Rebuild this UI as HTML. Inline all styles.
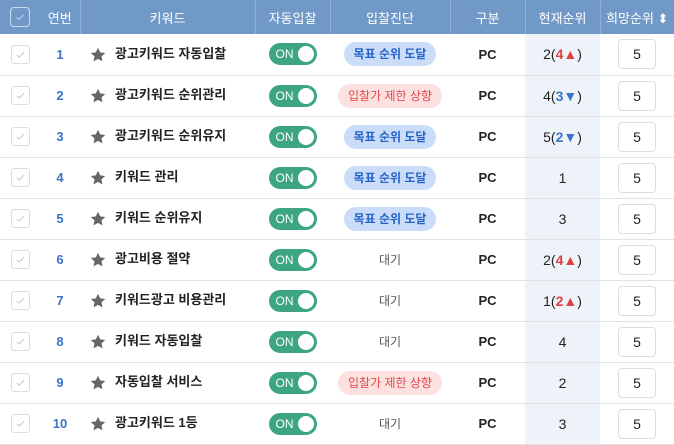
<!DOCTYPE html>
<html><head><meta charset="utf-8"><style>
*{box-sizing:border-box;margin:0;padding:0}
body{width:674px;height:444px;overflow:hidden;background:#fff;font-family:"Liberation Sans","Noto Sans CJK KR",sans-serif;}
table{border-collapse:collapse;table-layout:fixed;width:674px}
th{background:#7199c8;color:#fff;font-weight:normal;font-size:13px;height:34px;border-right:1px solid #8fb0d6}
th:last-child{border-right:none}
td{height:41px;border-bottom:1px solid #e2e2e2;text-align:center;font-size:13px;color:#222;vertical-align:middle}
td.kw{text-align:left;padding-left:10px;font-weight:bold;color:#222}
.k{display:flex;align-items:center;height:20px;line-height:20px;margin-top:-1px}
.k svg{margin-right:9px;flex:none;position:relative;top:1px}
td.n{color:#3a74c9;font-weight:bold}
td.cur{background:#eef3fa;font-size:14px}
.cb{display:inline-block;width:19px;height:19px;border:1px solid #ddd;border-radius:3px;vertical-align:middle}
.hcb{border-color:#c9dbef;border-radius:4px;width:20px;height:20px}
.tg{display:inline-block;width:48px;height:22px;border-radius:11px;background:#3da584;color:#fff;font-size:12px;position:relative;text-align:left;padding-left:7px;line-height:22px;vertical-align:middle}
.tg:after{content:"";position:absolute;right:3px;top:3px;width:16px;height:16px;border-radius:50%;background:#fff}
.bd{display:inline-block;padding:0 10px;height:24px;line-height:24px;border-radius:12px;font-size:12px;font-weight:bold}
.b{background:#cadcf7;color:#2563c9}
.r{background:#fde1e1;color:#e04a4a;font-weight:normal}
.w{color:#555;font-size:12px}
.in{display:inline-block;width:38px;height:30px;border:1px solid #ddd;border-radius:4px;line-height:28px;font-size:14px}
.up{color:#e04040;font-weight:bold}.dn{color:#3a74c9;font-weight:bold}
</style></head><body>
<svg width="0" height="0" style="position:absolute"><defs>
<symbol id="s" viewBox="0 0 16 16"><path d="M8 0.8l2.2 4.6 5 .6-3.7 3.4 1 5-4.5-2.5-4.5 2.5 1-5L.8 6l5-.6z" fill="#666"/></symbol>
<symbol id="c" viewBox="0 0 19 19"><path d="M5.5 9.8l2.6 2.6 5.4-5.6" fill="none" stroke="#c4c4c4" stroke-width="1"/></symbol>
</defs></svg>
<table>
<colgroup><col style="width:40px"><col style="width:40px"><col style="width:175px"><col style="width:75px"><col style="width:120px"><col style="width:75px"><col style="width:75px"><col style="width:74px"></colgroup>
<tr><th style="border-right:none"><span class="cb hcb"><svg width="18" height="18" viewBox="0 0 19 19"><path d="M5.5 9.8l2.6 2.6 5.4-5.6" fill="none" stroke="#b9cfea" stroke-width="1"/></svg></span></th><th>연번</th><th>키워드</th><th>자동입찰</th><th>입찰진단</th><th>구분</th><th>현재순위</th><th>희망순위 ⬍</th></tr>
<tr><td><span class="cb"><svg width="17" height="17"><use href="#c"/></svg></span></td><td class="n">1</td><td class="kw"><div class="k"><svg width="16" height="16"><use href="#s"/></svg>광고키워드 자동입찰</div></td><td><span class="tg">ON</span></td><td><span class="bd b">목표 순위 도달</span></td><td><b>PC</b></td><td class="cur">2(<span class="up">4▲</span>)</td><td><span class="in">5</span></td></tr>
<tr><td><span class="cb"><svg width="17" height="17"><use href="#c"/></svg></span></td><td class="n">2</td><td class="kw"><div class="k"><svg width="16" height="16"><use href="#s"/></svg>광고키워드 순위관리</div></td><td><span class="tg">ON</span></td><td><span class="bd r">입찰가 제한 상향</span></td><td><b>PC</b></td><td class="cur">4(<span class="dn">3▼</span>)</td><td><span class="in">5</span></td></tr>
<tr><td><span class="cb"><svg width="17" height="17"><use href="#c"/></svg></span></td><td class="n">3</td><td class="kw"><div class="k"><svg width="16" height="16"><use href="#s"/></svg>광고키워드 순위유지</div></td><td><span class="tg">ON</span></td><td><span class="bd b">목표 순위 도달</span></td><td><b>PC</b></td><td class="cur">5(<span class="dn">2▼</span>)</td><td><span class="in">5</span></td></tr>
<tr><td><span class="cb"><svg width="17" height="17"><use href="#c"/></svg></span></td><td class="n">4</td><td class="kw"><div class="k"><svg width="16" height="16"><use href="#s"/></svg>키워드 관리</div></td><td><span class="tg">ON</span></td><td><span class="bd b">목표 순위 도달</span></td><td><b>PC</b></td><td class="cur">1</td><td><span class="in">5</span></td></tr>
<tr><td><span class="cb"><svg width="17" height="17"><use href="#c"/></svg></span></td><td class="n">5</td><td class="kw"><div class="k"><svg width="16" height="16"><use href="#s"/></svg>키워드 순위유지</div></td><td><span class="tg">ON</span></td><td><span class="bd b">목표 순위 도달</span></td><td><b>PC</b></td><td class="cur">3</td><td><span class="in">5</span></td></tr>
<tr><td><span class="cb"><svg width="17" height="17"><use href="#c"/></svg></span></td><td class="n">6</td><td class="kw"><div class="k"><svg width="16" height="16"><use href="#s"/></svg>광고비용 절약</div></td><td><span class="tg">ON</span></td><td><span class="w">대기</span></td><td><b>PC</b></td><td class="cur">2(<span class="up">4▲</span>)</td><td><span class="in">5</span></td></tr>
<tr><td><span class="cb"><svg width="17" height="17"><use href="#c"/></svg></span></td><td class="n">7</td><td class="kw"><div class="k"><svg width="16" height="16"><use href="#s"/></svg>키워드광고 비용관리</div></td><td><span class="tg">ON</span></td><td><span class="w">대기</span></td><td><b>PC</b></td><td class="cur">1(<span class="up">2▲</span>)</td><td><span class="in">5</span></td></tr>
<tr><td><span class="cb"><svg width="17" height="17"><use href="#c"/></svg></span></td><td class="n">8</td><td class="kw"><div class="k"><svg width="16" height="16"><use href="#s"/></svg>키워드 자동입찰</div></td><td><span class="tg">ON</span></td><td><span class="w">대기</span></td><td><b>PC</b></td><td class="cur">4</td><td><span class="in">5</span></td></tr>
<tr><td><span class="cb"><svg width="17" height="17"><use href="#c"/></svg></span></td><td class="n">9</td><td class="kw"><div class="k"><svg width="16" height="16"><use href="#s"/></svg>자동입찰 서비스</div></td><td><span class="tg">ON</span></td><td><span class="bd r">입찰가 제한 상향</span></td><td><b>PC</b></td><td class="cur">2</td><td><span class="in">5</span></td></tr>
<tr><td><span class="cb"><svg width="17" height="17"><use href="#c"/></svg></span></td><td class="n">10</td><td class="kw"><div class="k"><svg width="16" height="16"><use href="#s"/></svg>광고키워드 1등</div></td><td><span class="tg">ON</span></td><td><span class="w">대기</span></td><td><b>PC</b></td><td class="cur">3</td><td><span class="in">5</span></td></tr>
</table>
</body></html>
